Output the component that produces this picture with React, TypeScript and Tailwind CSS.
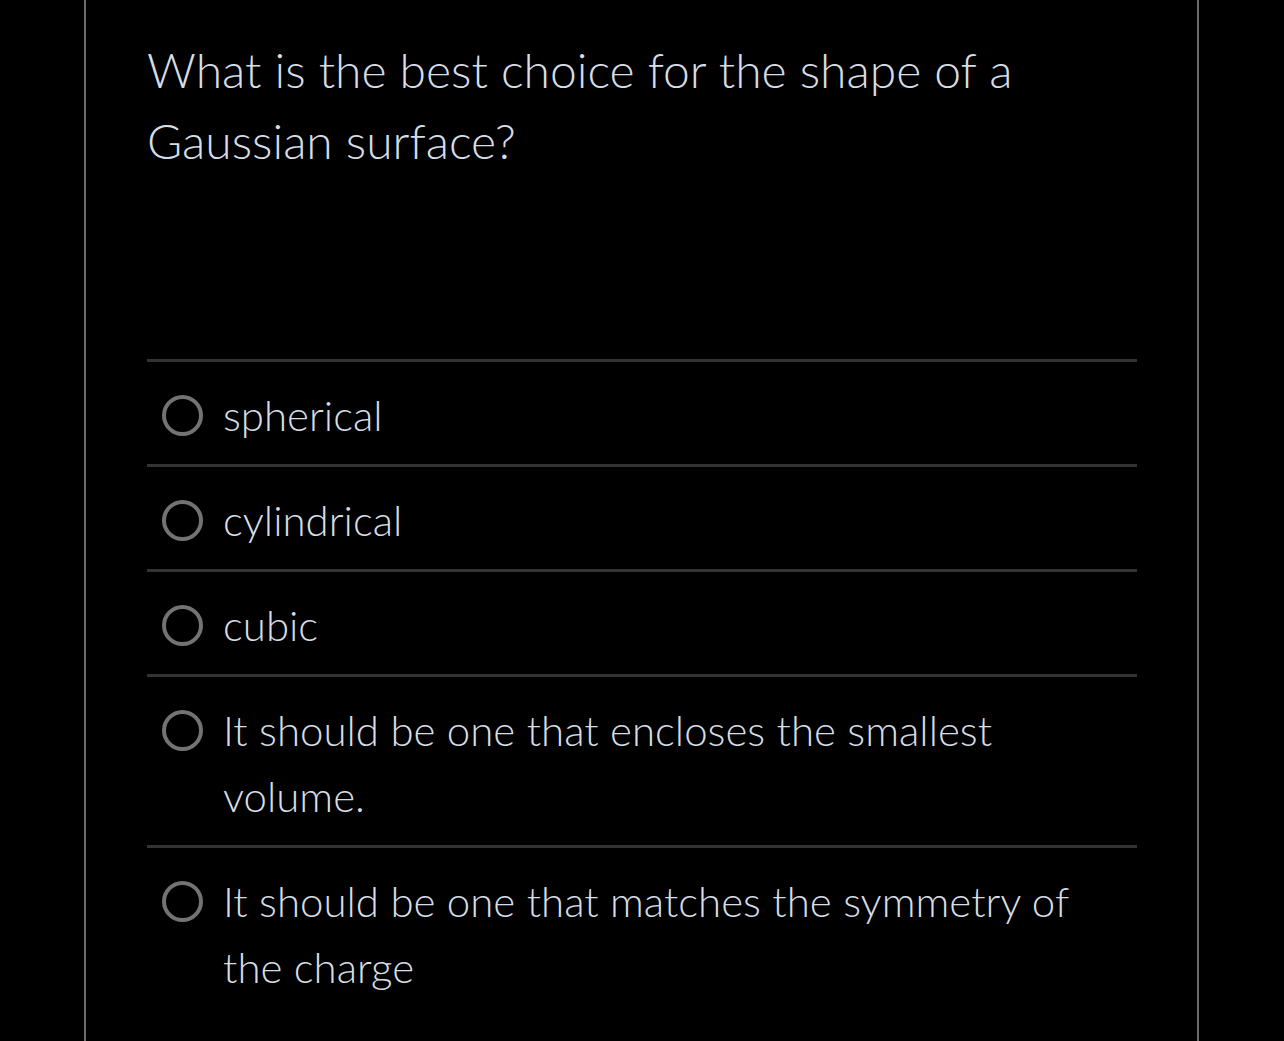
const options = [
  "spherical",
  "cylindrical",
  "cubic",
  "It should be one that encloses the smallest volume.",
  "It should be one that matches the symmetry of the charge",
];

function Radio() {
  return (
    <span className="flex h-[66px] w-[42px] shrink-0 items-center justify-center">
      <span className="block h-[41px] w-[41px] rounded-full border-[4px] border-[#737373]" />
    </span>
  );
}

export default function App() {
  return (
    <div
      className="min-h-screen bg-black"
      style={{ fontFamily: "Lato, 'Noto Sans', sans-serif" }}
    >
      <div className="ml-[84px] w-[1115px] min-h-[1041px] border-x-[2px] border-[#6b6b6b] pl-[61px] pr-[60px] pt-[34px]">
        <h1 className="w-[900px] text-[48px] font-light leading-[71px] text-[#d6dde4]">
          What is the best choice for the shape of a Gaussian surface?
        </h1>
        <div className="mt-[183px]">
          {options.map((o) => (
            <div
              key={o}
              className="flex items-start gap-[20px] border-t-[3px] border-[#333333] pt-[20px] pb-[16px] pl-[14px]"
            >
              <Radio />
              <p className="w-[880px] text-[42px] font-light leading-[66px] text-[#d6dde4]">
                {o}
              </p>
            </div>
          ))}
        </div>
      </div>
    </div>
  );
}
